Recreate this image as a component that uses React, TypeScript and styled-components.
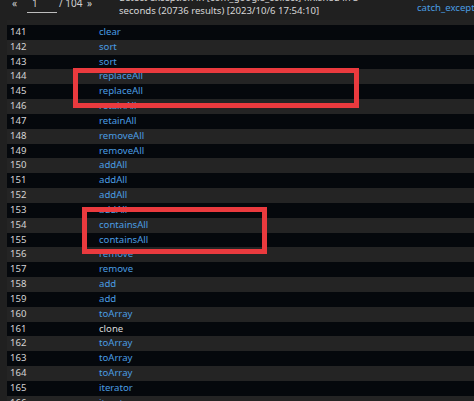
import React from "react";
import styled, { createGlobalStyle } from "styled-components";

const GlobalStyle = createGlobalStyle`
  html, body { margin: 0; padding: 0; background: #202020; }
  body { font-family: "Noto Sans", "Open Sans", sans-serif; }
`;

const Page = styled.div`
  position: relative;
  width: 474px;
  height: 401px;
  overflow: hidden;
  background: #202020;
  display: flex;
  flex-direction: column;
  font-size: 9.6px;
  color: #d2d2d2;
`;

const TopBar = styled.div`
  height: 20px;
  flex: none;
  display: flex;
  align-items: flex-start;
  background: #202020;
  overflow: hidden;
  white-space: nowrap;
`;

const Pager = styled.div`
  display: flex;
  align-items: flex-start;
  margin-top: -3px;
  margin-left: 12px;
  font-size: 10px;
  line-height: 12px;
  color: #cfcfcf;
`;

const PageArrow = styled.span`
  width: 9px;
`;

const PageInput = styled.span`
  width: 30px;
  margin-left: 6px;
  padding-left: 5px;
  height: 16px;
  box-sizing: border-box;
  border-bottom: 1px solid #bdbdbd;
`;

const PageTotal = styled.span`
  margin-left: 2px;
  width: 28px;
`;

const Status = styled.div`
  margin-top: -9px;
  margin-left: 23px;
  line-height: 13px;
  color: #d6d6d6;
  width: 285px;
  overflow: hidden;
`;

const LinksCol = styled.div`
  margin-top: -10px;
  margin-left: auto;
  width: 57px;
  line-height: 12px;
  color: #4a9de2;
  overflow: hidden;
`;

const Table = styled.div`
  margin-left: 7px;
  display: flex;
  flex-direction: column;
`;

const Row = styled.div<{ $dark: boolean }>`
  height: 14.83px;
  flex: none;
  display: flex;
  align-items: center;
  background: ${(p) => (p.$dark ? "#05080c" : "#242424")};
  line-height: 14.83px;
  white-space: nowrap;
`;

const PeekRow = styled(Row)`
  height: 5px;
  overflow: hidden;
  align-items: flex-end;
  opacity: 0.55;
`;

const NumCell = styled.span`
  width: 92px;
  padding-left: 3px;
  box-sizing: border-box;
  color: #d4d4d4;
`;

const NameCell = styled.span<{ $plain?: boolean }>`
  color: ${(p) => (p.$plain ? "#d8d8d8" : "#4a9de2")};
`;

const Highlight = styled.div`
  position: absolute;
  box-sizing: border-box;
  border: 5px solid #ea3a3e;
  pointer-events: none;
`;

const rows: [number, string][] = [
  [141, "clear"],
  [142, "sort"],
  [143, "sort"],
  [144, "replaceAll"],
  [145, "replaceAll"],
  [146, "retainAll"],
  [147, "retainAll"],
  [148, "removeAll"],
  [149, "removeAll"],
  [150, "addAll"],
  [151, "addAll"],
  [152, "addAll"],
  [153, "addAll"],
  [154, "containsAll"],
  [155, "containsAll"],
  [156, "remove"],
  [157, "remove"],
  [158, "add"],
  [159, "add"],
  [160, "toArray"],
  [161, "clone"],
  [162, "toArray"],
  [163, "toArray"],
  [164, "toArray"],
  [165, "iterator"],
  [166, "iterator"],
];

export default function App() {
  return (
    <>
      <GlobalStyle />
      <Page>
        <TopBar>
          <Pager>
            <PageArrow>«</PageArrow>
            <PageInput>1</PageInput>
            <PageTotal>/ 104</PageTotal>
            <PageArrow>»</PageArrow>
          </Pager>
          <Status>
            <div>detect exception in [com_google_collect] finished in 3</div>
            <div>seconds (20736 results) [2023/10/6 17:54:10]</div>
          </Status>
          <LinksCol>
            <div>sport</div>
            <div>catch_exception</div>
          </LinksCol>
        </TopBar>
        <Table>
          <PeekRow $dark={false}>
            <NumCell>140</NumCell>
            <NameCell>clear</NameCell>
          </PeekRow>
          {rows.map(([n, name], i) => (
            <Row key={n} $dark={i % 2 === 0}>
              <NumCell>{n}</NumCell>
              <NameCell $plain={name === "clone"}>{name}</NameCell>
            </Row>
          ))}
        </Table>
        <Highlight style={{ left: 73, top: 68, width: 286, height: 40 }} />
        <Highlight style={{ left: 82, top: 207, width: 185, height: 47 }} />
      </Page>
    </>
  );
}
